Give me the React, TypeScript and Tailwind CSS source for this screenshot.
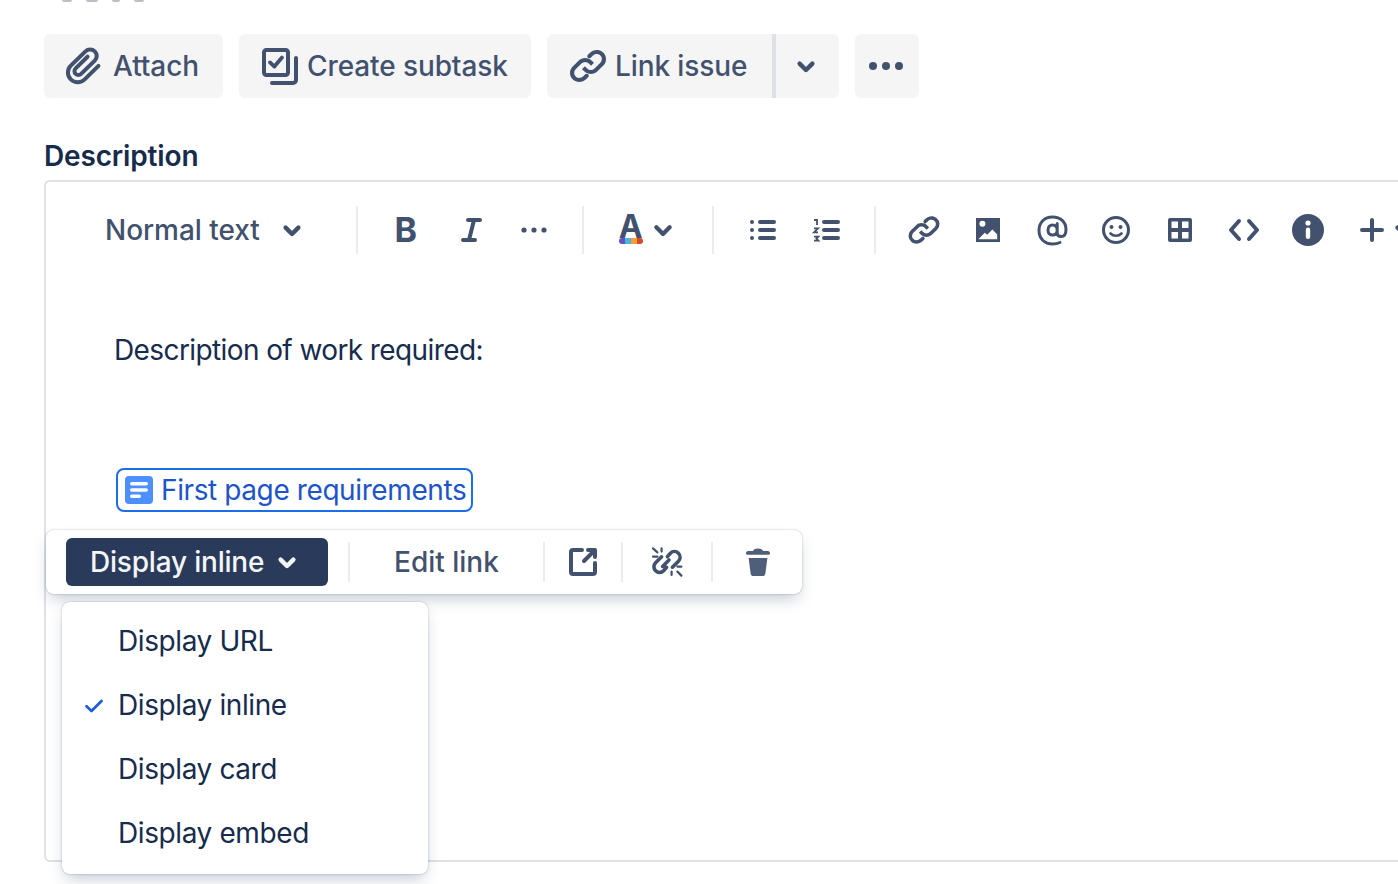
import React from "react";

const C = "#42526E";

function Ic({ children, size = 48, className = "" }: { children: React.ReactNode; size?: number; className?: string }) {
  return (
    <svg width={size} height={size} viewBox="0 0 24 24" fill="none" className={`shrink-0 ${className}`}>
      {children}
    </svg>
  );
}

const Chevron = ({ color = C, size = 48 }: { color?: string; size?: number }) => (
  <Ic size={size}>
    <path d="M8.8 10.8 12 14l3.200-3.200" stroke={color} strokeWidth="2.200" strokeLinecap="round" strokeLinejoin="round" />
  </Ic>
);

const LinkPath = () => (
  <path
    fillRule="evenodd"
    clipRule="evenodd"
    fill={C}
    d="M12.856 5.457l-.937.92a1.002 1.002 0 000 1.437 1.047 1.047 0 001.463 0l.984-.966c.967-.95 2.542-1.135 3.602-.288a2.54 2.54 0 01.203 3.81l-2.903 2.852a2.646 2.646 0 01-3.696 0l-1.11-1.09L9 13.57l1.108 1.089c1.822 1.788 4.802 1.788 6.622 0l2.905-2.852a4.558 4.558 0 00-.357-6.82c-1.893-1.517-4.695-1.226-6.422.47M11.144 18.543l.937-.92a1.002 1.002 0 000-1.437 1.047 1.047 0 00-1.463 0l-.984.966c-.967.95-2.542 1.135-3.602.288a2.54 2.54 0 01-.203-3.81l2.903-2.852a2.646 2.646 0 013.696 0l1.11 1.09L15 10.43l-1.108-1.089c-1.822-1.788-4.802-1.788-6.622 0l-2.905 2.852a4.558 4.558 0 00.357 6.82c1.893 1.517 4.695 1.226 6.422-.47"
  />
);

function ActionButton({ icon, label, cls }: { icon: React.ReactNode; label: string; cls: string }) {
  return (
    <div className={`flex h-16 items-center bg-[#F5F5F6] ${cls}`}>
      {icon}
      <span className="text-[28px] font-[450] tracking-[-0.1px] text-[#42526E]">{label}</span>
    </div>
  );
}

const Sep = ({ cls = "" }: { cls?: string }) => <div className={`w-[2px] shrink-0 bg-[#EBECF0] ${cls}`} />;

const Cell = ({ children }: { children: React.ReactNode }) => (
  <div className="flex w-16 shrink-0 items-center justify-center">{children}</div>
);

function MenuItem({ label, checked }: { label: string; checked?: boolean }) {
  return (
    <div className="flex h-16 items-center">
      <div className="flex w-[56px] shrink-0 justify-start pl-[22px]">
        {checked && (
          <svg width="20" height="16" viewBox="0 0 20 16" fill="none">
            <path d="M2.500 8.200 7.500 13 17.500 3" stroke="#1D5FD6" strokeWidth="2.800" strokeLinecap="round" strokeLinejoin="round" />
          </svg>
        )}
      </div>
      <span className="-translate-y-px text-[28px] tracking-[-0.4px] text-[#172B4D]">{label}</span>
    </div>
  );
}

export default function App() {
  return (
    <div className="h-[884px] w-full overflow-hidden bg-white pl-[44px] font-['Inter',sans-serif] antialiased">
      <div className="flex h-[2px] items-start gap-[14px] pl-[18px]">
        <div className="h-[2px] w-[10px] rounded-b-full bg-[#b8bfca]" />
        <div className="h-[2px] w-[12px] rounded-b-full bg-[#b8bfca]" />
        <div className="h-[2px] w-[8px] rounded-b-full bg-[#b8bfca]" />
        <div className="h-[2px] w-[10px] rounded-b-full bg-[#b8bfca]" />
      </div>

      <div className="mt-8 flex gap-4">
        <ActionButton
          cls="w-[179px] rounded-[6px] pl-[16px]"
          label="Attach"
          icon={
            <Ic className="mr-[5px]">
              <path
                fill={C}
                d="M11.643 17.965c-1.53 1.495-4.016 1.496-5.542.004a3.773 3.773 0 01.002-5.412l7.34-7.173a2.316 2.316 0 013.241-.002c.9.88.902 2.306-.002 3.19l-6.817 6.66a.965.965 0 01-1.346 0 .924.924 0 010-1.325l5.944-5.81a1 1 0 10-1.398-1.43l-5.943 5.81a2.92 2.92 0 000 4.186 2.965 2.965 0 004.14.002l6.817-6.662a4.187 4.187 0 00.002-6.05 4.316 4.316 0 00-6.038.002l-7.34 7.174a5.772 5.772 0 00-.002 8.272c2.304 2.252 6.03 2.25 8.34-.004l6.896-6.74a1 1 0 00-1.398-1.43l-6.896 6.738z"
              />
            </Ic>
          }
        />
        <ActionButton
          cls="w-[292px] rounded-[6px] pl-[17px]"
          label="Create subtask"
          icon={
            <Ic className="mr-[3px]">
              <rect x="4" y="4" width="12" height="12.500" rx="1.200" stroke={C} strokeWidth="2" />
              <path d="M7 10.200 9.200 12.300 13 7.800" stroke={C} strokeWidth="1.900" strokeLinecap="round" strokeLinejoin="round" />
              <path d="M20 8v11a1.500 1.500 0 0 1-1.500 1.500H8" stroke={C} strokeWidth="2" strokeLinecap="round" />
            </Ic>
          }
        />
        <div className="flex">
          <ActionButton
            cls="w-[225px] rounded-l-[6px] pl-[17px]"
            label="Link issue"
            icon={
              <Ic className="mr-[3px]">
                <LinkPath />
              </Ic>
            }
          />
          <div className="h-16 w-1 bg-[#DFE1E6]" />
          <div className="flex h-16 w-[63px] items-center justify-center rounded-r-[6px] bg-[#F5F5F6] pr-[4px]">
            <Chevron />
          </div>
        </div>
        <div className="flex h-16 w-16 items-center justify-center rounded-[6px] bg-[#F5F5F6] pr-[2px]">
          <Ic>
            <circle cx="5.500" cy="12" r="2" fill={C} />
            <circle cx="12" cy="12" r="2" fill={C} />
            <circle cx="18.500" cy="12" r="2" fill={C} />
          </Ic>
        </div>
      </div>

      <div className="mt-[44px] text-[28px] leading-[28px] font-semibold tracking-[-0.15px] text-[#172B4D]">Description</div>

      <div className="relative mt-[10px] h-[682px] w-[1400px] rounded-[6px] border-2 border-[#DFE1E6]">
        <div className="flex h-[96px] items-center pl-[59px]">
          <span className="text-[28px] font-[450] tracking-[-0.05px] text-[#42526E]">Normal text</span>
          <div className="ml-[8px]">
            <Chevron />
          </div>
          <Sep cls="ml-[40px] h-12 mr-[16px]" />
          <Cell>
            <span className="text-[34px] leading-none font-bold text-[#42526E]">B</span>
          </Cell>
          <Cell>
            <Ic>
              <path d="M11 7h6M8.500 17h6M14 7 11.500 17" stroke={C} strokeWidth="2" strokeLinecap="round" />
            </Ic>
          </Cell>
          <Cell>
            <Ic>
              <circle cx="7" cy="12" r="1.300" fill={C} />
              <circle cx="12" cy="12" r="1.300" fill={C} />
              <circle cx="17" cy="12" r="1.300" fill={C} />
            </Ic>
          </Cell>
          <Sep cls="ml-[16px] h-12 mr-[16px]" />
          <div className="flex w-[112px] shrink-0 items-center justify-center pr-[18px]">
            <div className="relative h-12 w-[32px]">
              <span className="absolute top-[5px] left-0 w-full text-center text-[32px] leading-[32px] font-bold text-[#42526E]">A</span>
              <div className="absolute top-[32px] left-[4px] flex h-[6px] w-[24px] overflow-hidden rounded-full">
                <div className="flex-1 bg-[#6554C0]" />
                <div className="flex-1 bg-[#4CB3D9]" />
                <div className="flex-1 bg-[#F79A3E]" />
                <div className="flex-1 bg-[#D04B2A]" />
              </div>
            </div>
            <Ic size={32}>
              <path d="M7 10l5 5 5-5" stroke={C} strokeWidth="3.200" strokeLinecap="round" strokeLinejoin="round" />
            </Ic>
          </div>
          <Sep cls="h-12 mr-[16px]" />
          <Cell>
            <Ic>
              <circle cx="7" cy="8" r="1" fill={C} />
              <circle cx="7" cy="12" r="1" fill={C} />
              <circle cx="7" cy="16" r="1" fill={C} />
              <path d="M11 8h7M11 12h7M11 16h7" stroke={C} strokeWidth="2" strokeLinecap="round" />
            </Ic>
          </Cell>
          <Cell>
            <Ic>
              <path d="M6 7h1.500v2.500M6 11.200h2l-2 2h2M6 15.300h2.200l-1 1 1 1H6" stroke={C} strokeWidth="0.900" />
              <path d="M11 8h7M11 12h7M11 16h7" stroke={C} strokeWidth="2" strokeLinecap="round" />
            </Ic>
          </Cell>
          <Sep cls="ml-[16px] h-12 mr-[16px]" />
          <Cell>
            <Ic>
              <g transform="translate(12 12) scale(0.860) translate(-12 -12)">
                <LinkPath />
              </g>
            </Ic>
          </Cell>
          <Cell>
            <Ic>
              <path
                fillRule="evenodd"
                fill={C}
                d="M6 6h12v12H6zM9.200 10.400a1.500 1.500 0 1 0 0-3 1.500 1.500 0 0 0 0 3zM7.400 16.600h9.200v-2.400l-2.400-2.400-2.600 2.600-1.200-1-3 3z"
              />
            </Ic>
          </Cell>
          <Cell>
            <svg width="48" height="48" viewBox="0 0 48 48" fill="none">
              <path
                d="M32 36.500c-2.200 1-4.800 1.500-7.500 1.500C16.500 38 11 32.500 11 24.500S16.500 11 24.500 11 38 16 38 23.500c0 4.500-1.800 7-4.800 7-2.500 0-4-1.500-4-4v-9M29.200 24c0 3-2 5-4.700 5s-4.500-2-4.500-5 1.900-5 4.500-5 4.700 2 4.700 5z"
                stroke={C}
                strokeWidth="3"
                strokeLinecap="round"
              />
            </svg>
          </Cell>
          <Cell>
            <svg width="48" height="48" viewBox="0 0 48 48" fill="none">
              <circle cx="24" cy="24" r="12.500" stroke={C} strokeWidth="3" />
              <circle cx="19.500" cy="21" r="2" fill={C} />
              <circle cx="28.500" cy="21" r="2" fill={C} />
              <path d="M18.500 27.500c3 3 8 3 11 0" stroke={C} strokeWidth="2.600" strokeLinecap="round" />
            </svg>
          </Cell>
          <Cell>
            <svg width="48" height="48" viewBox="0 0 48 48" fill="none">
              <path
                fillRule="evenodd"
                fill={C}
                d="M14 12h20a2 2 0 0 1 2 2v20a2 2 0 0 1-2 2H14a2 2 0 0 1-2-2V14a2 2 0 0 1 2-2zm1.500 3.500v6.500h6.500v-6.500zm10.500 0v6.500h6.500v-6.500zm-10.500 10.500v6.500h6.500V26zm10.500 0v6.500h6.500V26z"
              />
            </svg>
          </Cell>
          <Cell>
            <svg width="48" height="48" viewBox="0 0 48 48" fill="none">
              <path d="M19 15 11 24l8 9M29 15l8 9-8 9" stroke={C} strokeWidth="4" strokeLinecap="round" strokeLinejoin="round" />
            </svg>
          </Cell>
          <Cell>
            <svg width="48" height="48" viewBox="0 0 48 48" fill="none">
              <circle cx="24" cy="24" r="16" fill={C} />
              <circle cx="24" cy="17" r="2.600" fill="white" />
              <rect x="21.800" y="21.500" width="4.400" height="11.500" rx="2.200" fill="white" />
            </svg>
          </Cell>
          <Cell>
            <svg width="48" height="48" viewBox="0 0 48 48" fill="none">
              <path d="M24 14v20M14 24h20" stroke={C} strokeWidth="4" strokeLinecap="round" />
            </svg>
          </Cell>
          <div className="-ml-[24px]">
            <Chevron />
          </div>
        </div>

        <div className="mt-[52px] pl-[68px] text-[28px] leading-[40px] tracking-[-0.6px] text-[#172B4D]">Description of work required:</div>

        <div className="mt-[98px] ml-[70px] flex h-[44px] w-[357px] items-center rounded-[8px] border-2 border-[#1D6CE8] pl-[7px]">
          <svg width="28" height="28" viewBox="0 0 28 28" className="mr-[8px] shrink-0">
            <rect width="28" height="28" rx="4" fill="#4C8FFF" />
            <rect x="5" y="6" width="18" height="3.400" rx="1.700" fill="white" />
            <rect x="5" y="12.300" width="18" height="3.400" rx="1.700" fill="white" />
            <rect x="5" y="18.600" width="11" height="3.400" rx="1.700" fill="white" />
          </svg>
          <span className="text-[28px] tracking-[-0.4px] whitespace-nowrap text-[#1D55C8]">First page requirements</span>
        </div>

        <div className="absolute top-[348px] left-0 flex h-16 w-[756px] items-center rounded-[8px] bg-white pl-[20px] shadow-[0_8px_16px_-4px_rgba(9,30,66,0.25),0_0_2px_rgba(9,30,66,0.31)]">
          <div className="flex h-12 w-[262px] shrink-0 items-center rounded-[6px] bg-[#2A3A5B] pl-[24px]">
            <span className="text-[28px] font-medium tracking-[-0.2px] text-[#F4F5F7]">Display inline</span>
            <div className="-ml-[1px]">
              <Chevron color="#F4F5F7" />
            </div>
          </div>
          <Sep cls="ml-[20px] h-10" />
          <span className="ml-[44px] w-[149px] shrink-0 text-[28px] font-medium text-[#42526E]">Edit link</span>
          <Sep cls="h-10" />
          <div className="flex w-[76px] shrink-0 justify-center">
            <Ic>
              <path d="M11.500 6H7a1 1 0 0 0-1 1v10a1 1 0 0 0 1 1h10a1 1 0 0 0 1-1v-4.500M12.500 11.500 18 6M14.500 6H18V9.500" stroke={C} strokeWidth="2" strokeLinecap="round" strokeLinejoin="round" />
            </Ic>
          </div>
          <Sep cls="h-10" />
          <div className="flex w-[88px] shrink-0 justify-center">
            <Ic>
              <path d="M12.200 9.300l1.500-1.700a2.800 2.800 0 0 1 4 4l-3 3M11.800 14.700l-1.500 1.700a2.800 2.800 0 0 1-4-4l3-3M9.800 14.200l3.200-3.200" stroke={C} strokeWidth="1.800" strokeLinecap="round" />
              <path d="M5 5.200 7.200 7.200M9.300 5.200V6.800M5 9.300H7.200M17.200 14.300H19.200M14.300 16.800V18.500M17.200 16.800 19.200 18.800" stroke={C} strokeWidth="1.100" strokeLinecap="round" />
            </Ic>
          </div>
          <Sep cls="h-10" />
          <div className="flex w-[90px] shrink-0 justify-center">
            <Ic>
              <path fill="#505F79" d="M6 7.500c0-.8.700-1 1.500-1H9.500c.2-.8 1-1.300 2.500-1.300s2.300.5 2.500 1.300h2c.8 0 1.500.2 1.500 1s-.4.900-1 .9H7c-.6 0-1-.1-1-.9zM7.300 10h9.400l-1 7.700c-.1.800-.7 1.300-1.500 1.300H9.800c-.8 0-1.400-.5-1.500-1.300z" />
            </Ic>
          </div>
        </div>

        <div className="absolute top-[420px] left-[16px] h-[272px] w-[366px] rounded-[8px] bg-white py-[8px] shadow-[0_8px_16px_-4px_rgba(9,30,66,0.25),0_0_2px_rgba(9,30,66,0.31)]">
          <MenuItem label="Display URL" />
          <MenuItem label="Display inline" checked />
          <MenuItem label="Display card" />
          <MenuItem label="Display embed" />
        </div>
      </div>
    </div>
  );
}
